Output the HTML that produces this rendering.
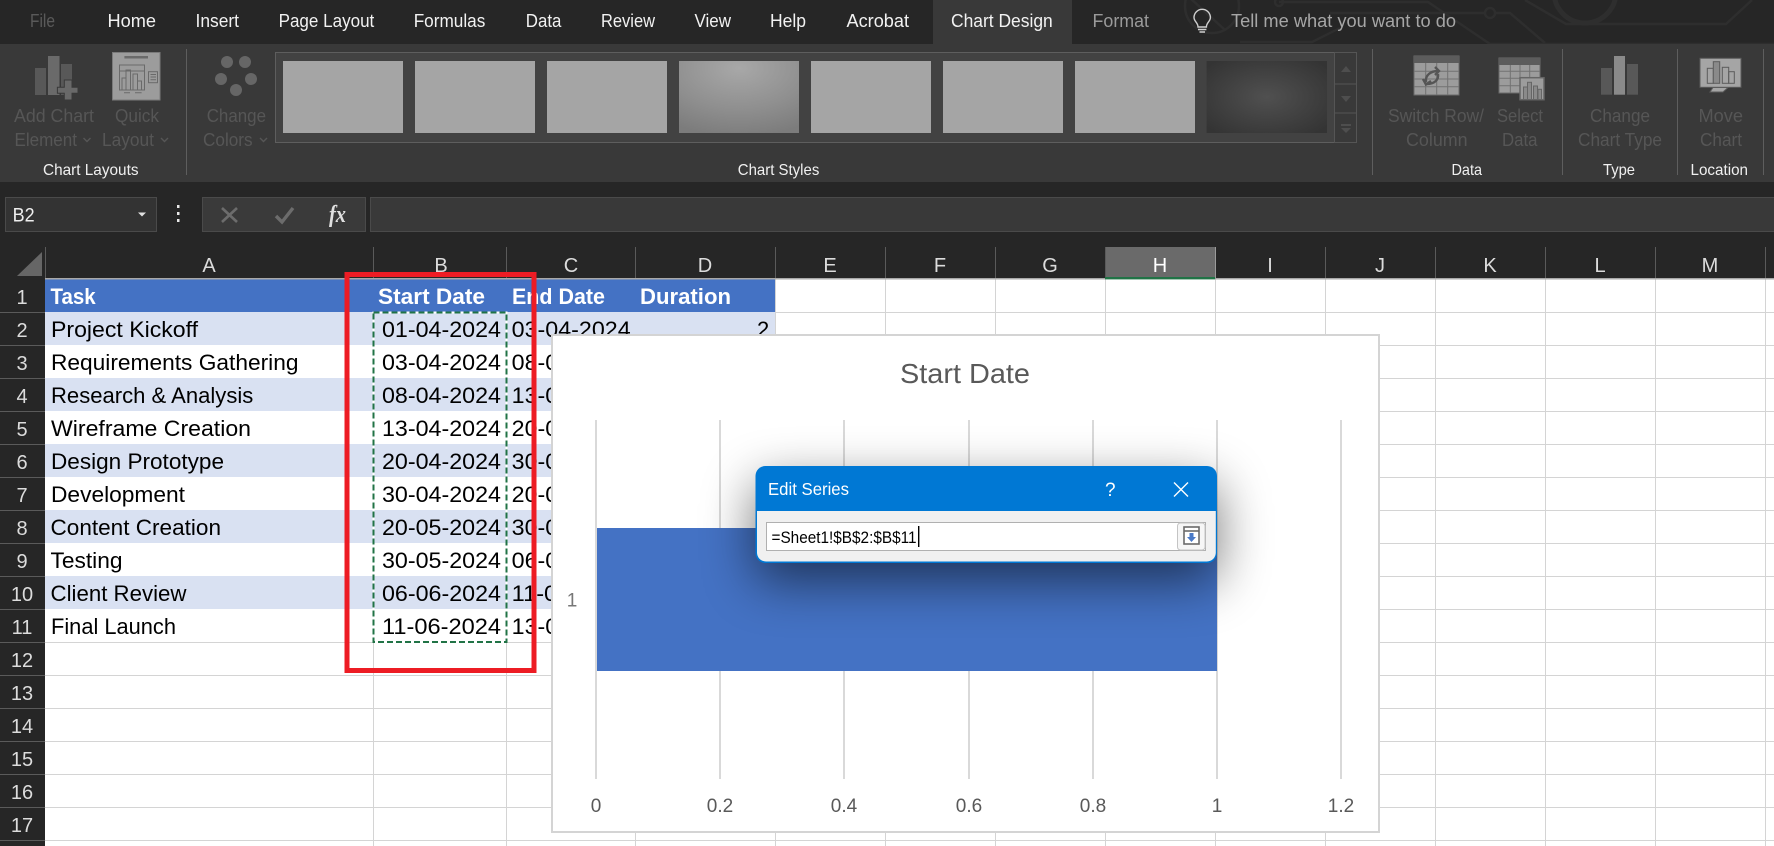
<!DOCTYPE html>
<html lang="en">
<head>
<meta charset="utf-8">
<title>Edit Series</title>
<style>
html,body{margin:0;padding:0;background:#262626;width:1774px;height:846px;overflow:hidden}
svg{display:block}
text{font-family:"Liberation Sans",sans-serif}
.tab{font-size:18px;fill:#f2f2f2}
.dis{font-size:18px;fill:#565656}
.grp{font-size:16px;fill:#f0f0f0}
.col{font-size:20px;fill:#dcdcdc;text-anchor:middle}
.row{font-size:20px;fill:#dcdcdc;text-anchor:middle}
.cell{font-size:22px;fill:#000}
.hd{font-size:22px;fill:#fff;font-weight:bold}
.ax{font-size:19px;fill:#595959;text-anchor:middle}
</style>
</head>
<body>
<svg xmlns="http://www.w3.org/2000/svg" width="1774" height="846" viewBox="0 0 1774 846">
<defs>
<radialGradient id="g4" cx="50%" cy="10%" r="95%"><stop offset="0" stop-color="#a8a8a8"/><stop offset=".6" stop-color="#8f8f8f"/><stop offset="1" stop-color="#7c7c7c"/></radialGradient>
<radialGradient id="g8" cx="50%" cy="50%" r="65%"><stop offset="0" stop-color="#505050"/><stop offset="1" stop-color="#343434"/></radialGradient>
<filter id="sh" x="-30%" y="-120%" width="160%" height="400%"><feGaussianBlur stdDeviation="26"/></filter>
</defs>

<!-- backgrounds -->
<rect width="1774" height="846" fill="#262626"/>
<!-- circuit decoration -->
<g fill="none" stroke="#2e2e2e" stroke-width="2.5">
<circle cx="1212" cy="6" r="27"/>
<path d="M1190 -2L1225 30"/>
<path d="M1279 2H1428L1490 44H1774"/>
<circle cx="1279" cy="2" r="4"/>
<path d="M1330 13H1485"/><circle cx="1490" cy="13" r="5"/>
<path d="M1495 13H1510L1545 43"/>
<circle cx="1585" cy="-8" r="31" stroke-width="5"/>
<path d="M1525 0L1566 24H1726L1752 0"/>
<path d="M1240 42H1312L1340 28"/>
</g>
<!-- ribbon -->
<rect x="0" y="44" width="1774" height="138" fill="#393939"/>
<rect x="933" y="0" width="139" height="44" fill="#393939"/>

<!-- tabs -->
<text class="tab" style="fill:#5a5a5a" x="30" y="27" textLength="25" lengthAdjust="spacingAndGlyphs">File</text>
<text class="tab" x="107.5" y="27" textLength="48.5" lengthAdjust="spacingAndGlyphs">Home</text>
<text class="tab" x="195.5" y="27" textLength="43.5" lengthAdjust="spacingAndGlyphs">Insert</text>
<text class="tab" x="278.6" y="27" textLength="95.7" lengthAdjust="spacingAndGlyphs">Page Layout</text>
<text class="tab" x="413.7" y="27" textLength="71.6" lengthAdjust="spacingAndGlyphs">Formulas</text>
<text class="tab" x="525.8" y="27" textLength="35.6" lengthAdjust="spacingAndGlyphs">Data</text>
<text class="tab" x="601" y="27" textLength="54" lengthAdjust="spacingAndGlyphs">Review</text>
<text class="tab" x="694.5" y="27" textLength="36.5" lengthAdjust="spacingAndGlyphs">View</text>
<text class="tab" x="770" y="27" textLength="36" lengthAdjust="spacingAndGlyphs">Help</text>
<text class="tab" x="846.5" y="27" textLength="62.5" lengthAdjust="spacingAndGlyphs">Acrobat</text>
<text class="tab" x="951" y="27" textLength="101.7" lengthAdjust="spacingAndGlyphs">Chart Design</text>
<text class="tab" style="fill:#9a9a9a" x="1092.5" y="27" textLength="56.5" lengthAdjust="spacingAndGlyphs">Format</text>
<text class="tab" style="fill:#a6a6a6" x="1231" y="27" textLength="225" lengthAdjust="spacingAndGlyphs">Tell me what you want to do</text>
<!-- lightbulb -->
<g fill="none" stroke="#cfcfcf" stroke-width="1.4">
<path d="M1198 27C1198 22.5 1194 21.5 1194 17.5A8.2 8.2 0 0 1 1210.4 17.5C1210.4 21.5 1206.4 22.5 1206.4 27Z"/>
<path d="M1198 29.5H1206.4M1199.5 32H1205"/>
</g>

<!-- ribbon separators -->
<g stroke="#5e5e5e" stroke-width="1">
<path d="M186.5 49V175M1372.5 49V175M1562.5 49V175M1677.5 49V175M1763.5 49V175"/>
</g>

<!-- Add Chart icon -->
<rect x="35" y="68" width="11" height="27" fill="#585858"/>
<rect x="48" y="56" width="11.5" height="39" fill="#6a6a6a"/>
<rect x="61" y="64" width="11" height="31" fill="#585858"/>
<path d="M64.3 80H72V87.3H78V93.3H72V100H64.3V93.3H57.4V87.3H64.3Z" fill="#696969" stroke="#393939" stroke-width="1"/>
<!-- Quick layout icon -->
<rect x="112.5" y="52.5" width="47.5" height="47.5" fill="#9c9c9c" stroke="#7a7a7a"/>
<g fill="none" stroke="#6a6a6a" stroke-width="1">
<path d="M124.4 57.3H148" stroke-width="2.5"/>
<rect x="119.5" y="65" width="25" height="25"/>
<path d="M119.5 71H144.5"/>
<rect x="122" y="78" width="4" height="12"/><rect x="126" y="70" width="4.5" height="20"/><rect x="133" y="74" width="4.5" height="16"/><rect x="137.5" y="81" width="4" height="9"/>
<rect x="148.5" y="71.7" width="9" height="11"/>
<path d="M150.5 74.5H156M150.5 77H156M150.5 79.8H156"/>
<path d="M124 92.7H130M135 92.7H141.6"/>
</g>
<!-- Change colors icon -->
<g fill="#666">
<circle cx="227" cy="62" r="6"/><circle cx="245" cy="62" r="6"/><circle cx="221" cy="79" r="6"/><circle cx="251" cy="79" r="6"/><circle cx="236" cy="90" r="6"/>
</g>
<!-- ribbon disabled labels -->
<text class="dis" x="14" y="122" textLength="80" lengthAdjust="spacingAndGlyphs">Add Chart</text>
<text class="dis" x="14.5" y="146" textLength="62.5" lengthAdjust="spacingAndGlyphs">Element</text>
<text class="dis" x="115" y="122" textLength="44" lengthAdjust="spacingAndGlyphs">Quick</text>
<text class="dis" x="102" y="146" textLength="52" lengthAdjust="spacingAndGlyphs">Layout</text>
<text class="dis" x="206.7" y="122" textLength="59.3" lengthAdjust="spacingAndGlyphs">Change</text>
<text class="dis" x="203" y="146" textLength="49.6" lengthAdjust="spacingAndGlyphs">Colors</text>
<g fill="none" stroke="#565656" stroke-width="1.4">
<path d="M83.5 138L87 141.5L90.5 138M161 138L164.5 141.5L168 138M260 138L263.5 141.5L267 138"/>
</g>
<text class="dis" x="1388" y="122" textLength="96" lengthAdjust="spacingAndGlyphs">Switch Row/</text>
<text class="dis" x="1406" y="146" textLength="61.6" lengthAdjust="spacingAndGlyphs">Column</text>
<text class="dis" x="1497" y="122" textLength="46" lengthAdjust="spacingAndGlyphs">Select</text>
<text class="dis" x="1502" y="146" textLength="35.5" lengthAdjust="spacingAndGlyphs">Data</text>
<text class="dis" x="1590" y="122" textLength="60" lengthAdjust="spacingAndGlyphs">Change</text>
<text class="dis" x="1578" y="146" textLength="84" lengthAdjust="spacingAndGlyphs">Chart Type</text>
<text class="dis" x="1698.5" y="122" textLength="44.5" lengthAdjust="spacingAndGlyphs">Move</text>
<text class="dis" x="1700" y="146" textLength="42" lengthAdjust="spacingAndGlyphs">Chart</text>
<!-- group names -->
<text class="grp" x="43" y="175" textLength="95.5" lengthAdjust="spacingAndGlyphs">Chart Layouts</text>
<text class="grp" x="737.8" y="175" textLength="81.5" lengthAdjust="spacingAndGlyphs">Chart Styles</text>
<text class="grp" x="1451.5" y="175" textLength="30.5" lengthAdjust="spacingAndGlyphs">Data</text>
<text class="grp" x="1603" y="175" textLength="32" lengthAdjust="spacingAndGlyphs">Type</text>
<text class="grp" x="1690.5" y="175" textLength="57.5" lengthAdjust="spacingAndGlyphs">Location</text>

<!-- gallery -->
<rect x="275.5" y="52.5" width="1081" height="90" fill="#424242" stroke="#5e5e5e"/>
<g fill="#a5a5a5">
<rect x="283" y="61" width="120" height="72"/><rect x="415" y="61" width="120" height="72"/><rect x="547" y="61" width="120" height="72"/>
<rect x="679" y="61" width="120" height="72" fill="url(#g4)"/>
<rect x="811" y="61" width="120" height="72"/><rect x="943" y="61" width="120" height="72"/><rect x="1075" y="61" width="120" height="72"/>
<rect x="1206.6" y="61" width="120.4" height="72" fill="url(#g8)"/>
</g>
<rect x="1334.5" y="52.5" width="22" height="90" fill="#393939" stroke="#555"/>
<path d="M1334.5 84H1356.5M1334.5 113H1356.5" stroke="#555"/>
<g fill="#4e4e4e">
<path d="M1341 72L1346 66L1351 72Z"/><path d="M1341 96L1346 102L1351 96Z"/>
<rect x="1341" y="124" width="10" height="2"/><path d="M1341 128H1351L1346 133Z"/>
</g>

<!-- Switch row/col -->
<rect x="1414" y="56" width="45" height="39" fill="#9c9c9c" stroke="#6a6a6a"/>
<rect x="1414" y="56" width="45" height="7" fill="#5c5c5c"/>
<path d="M1425.7 63V95M1436.7 63V95M1447.7 63V95M1414 71.3H1459M1414 79H1459M1414 86.7H1459" stroke="#727272" stroke-width="1"/>
<g fill="none" stroke="#555" stroke-width="2.4">
<path d="M1426 82C1425 75 1431 71 1438 71M1435 67L1439 71L1435 75"/>
<path d="M1438 74C1439 80 1434 84 1427 84M1423 79L1426 84.5L1431 81"/>
</g>
<!-- Select data -->
<rect x="1499" y="58" width="41" height="35" fill="#9c9c9c" stroke="#6a6a6a"/>
<rect x="1499" y="58" width="41" height="7" fill="#5c5c5c"/>
<path d="M1510.3 65V93M1520 65V93M1529.7 65V78M1499 71.3H1540M1499 78.3H1540M1499 85.7H1520" stroke="#727272" stroke-width="1"/>
<rect x="1520" y="77.7" width="24" height="22" fill="#9c9c9c" stroke="#666" stroke-width="1.5"/>
<g fill="#8a8a8a" stroke="#666">
<rect x="1523.5" y="87" width="4" height="12.5"/><rect x="1527.5" y="82.3" width="4" height="17.2"/><rect x="1533.5" y="86" width="4" height="13.5"/><rect x="1538" y="89.3" width="3.5" height="10.2"/>
</g>
<!-- Change chart type -->
<rect x="1601" y="68" width="11" height="26.7" fill="#585858"/>
<rect x="1614" y="56" width="11" height="38.7" fill="#8a8a8a"/>
<rect x="1627" y="64" width="11" height="30.7" fill="#585858"/>
<!-- Move chart -->
<rect x="1700" y="58.3" width="41" height="29" fill="#a5a5a5" stroke="#5c5c5c"/>
<path d="M1713 87.5L1710 92H1723L1728 87.5Z" fill="#a5a5a5" stroke="#5c5c5c"/>
<g fill="none" stroke="#5c5c5c">
<rect x="1707.3" y="68.3" width="6" height="15"/><rect x="1713.3" y="61.7" width="6.4" height="21.6" fill="#8a8a8a"/>
<rect x="1722.3" y="67.3" width="6.4" height="16"/><rect x="1728.7" y="71.7" width="5.6" height="11.6"/>
</g>

<!-- formula bar -->
<rect x="5.5" y="197.5" width="151" height="34" fill="#333" stroke="#4a4a4a"/>
<text x="12.6" y="221.5" style="font-size:19px;fill:#efefef" textLength="22" lengthAdjust="spacingAndGlyphs">B2</text>
<path d="M138 212.5H146L142 216.5Z" fill="#e0e0e0"/>
<g fill="#e8e8e8"><rect x="177" y="205" width="2.5" height="3"/><rect x="177" y="212" width="2.5" height="3"/><rect x="177" y="219" width="2.5" height="3"/></g>
<rect x="202.5" y="197.5" width="163" height="34" fill="#3a3a3a" stroke="#4a4a4a"/>
<path d="M222 208L237 222M237 208L222 222" stroke="#6c6c6c" stroke-width="2.6" fill="none"/>
<path d="M276 216L282 222L293 208" stroke="#6c6c6c" stroke-width="3.4" fill="none"/>
<text x="329" y="222" style='font-family:"Liberation Serif",serif;font-size:24px;font-style:italic;font-weight:bold;fill:#e0e0e0' textLength="17" lengthAdjust="spacingAndGlyphs">fx</text>
<rect x="370.5" y="197.5" width="1410" height="34" fill="#393939" stroke="#4a4a4a"/>

<!-- corner -->
<path d="M42 252V276H17Z" fill="#666"/>
<rect x="1105" y="247" width="110" height="32" fill="#6a6a6a"/>
<path d="M45.5 247V279M373.5 247V279M506.5 247V279M635.5 247V279M775.5 247V279M885.5 247V279M995.5 247V279M1105.5 247V279M1215.5 247V279M1325.5 247V279M1435.5 247V279M1545.5 247V279M1655.5 247V279M1765.5 247V279" stroke="#5a5a5a" stroke-width="1"/>
<text class="col" x="209" y="272">A</text><text class="col" x="441" y="272">B</text><text class="col" x="571" y="272">C</text><text class="col" x="705" y="272">D</text><text class="col" x="830" y="272">E</text><text class="col" x="940" y="272">F</text><text class="col" x="1050" y="272">G</text><text class="col" x="1160" y="272" style="fill:#fff">H</text><text class="col" x="1270" y="272">I</text><text class="col" x="1380" y="272">J</text><text class="col" x="1490" y="272">K</text><text class="col" x="1600" y="272">L</text><text class="col" x="1710" y="272">M</text>

<!-- row headers -->
<path d="M0 312.5H45M0 345.5H45M0 378.5H45M0 411.5H45M0 444.5H45M0 477.5H45M0 510.5H45M0 543.5H45M0 576.5H45M0 609.5H45M0 642.5H45M0 675.5H45M0 708.5H45M0 741.5H45M0 774.5H45M0 807.5H45M0 840.5H45" stroke="#5a5a5a"/>
<text class="row" x="22" y="304">1</text><text class="row" x="22" y="337">2</text><text class="row" x="22" y="370">3</text><text class="row" x="22" y="403">4</text><text class="row" x="22" y="436">5</text><text class="row" x="22" y="469">6</text><text class="row" x="22" y="502">7</text><text class="row" x="22" y="535">8</text><text class="row" x="22" y="568">9</text><text class="row" x="22" y="601">10</text><text class="row" x="22" y="634">11</text><text class="row" x="22" y="667">12</text><text class="row" x="22" y="700">13</text><text class="row" x="22" y="733">14</text><text class="row" x="22" y="766">15</text><text class="row" x="22" y="799">16</text><text class="row" x="22" y="832">17</text>

<!-- sheet -->
<rect x="45" y="279" width="1729" height="567" fill="#fff"/>
<path d="M373.5 279V846M506.5 279V846M635.5 279V846M775.5 279V846M885.5 279V846M995.5 279V846M1105.5 279V846M1215.5 279V846M1325.5 279V846M1435.5 279V846M1545.5 279V846M1655.5 279V846M1765.5 279V846" stroke="#d4d4d4"/>
<path d="M45 312.5H1774M45 345.5H1774M45 378.5H1774M45 411.5H1774M45 444.5H1774M45 477.5H1774M45 510.5H1774M45 543.5H1774M45 576.5H1774M45 609.5H1774M45 642.5H1774M45 675.5H1774M45 708.5H1774M45 741.5H1774M45 774.5H1774M45 807.5H1774M45 840.5H1774" stroke="#d4d4d4"/>
<rect x="45" y="312" width="730" height="330" fill="#fff"/>
<rect x="45" y="279" width="730" height="33" fill="#4472c4"/>
<g fill="#d9e1f2">
<rect x="45" y="312" width="730" height="33"/><rect x="45" y="378" width="730" height="33"/><rect x="45" y="444" width="730" height="33"/><rect x="45" y="510" width="730" height="33"/><rect x="45" y="576" width="730" height="33"/>
</g>
<path d="M45 278.8H1105M1215 278.8H1774" stroke="#a8a8a8" stroke-width="1.5"/>
<rect x="1105" y="277" width="110" height="2.4" fill="#217346"/>
<path d="M1215.5 247V279" stroke="#9a9a9a"/>

<text class="hd" x="50.5" y="304" textLength="45.2" lengthAdjust="spacingAndGlyphs">Task</text>
<text class="hd" x="378" y="304" textLength="107" lengthAdjust="spacingAndGlyphs">Start Date</text>
<text class="hd" x="512" y="304" textLength="93" lengthAdjust="spacingAndGlyphs">End Date</text>
<text class="hd" x="640" y="304" textLength="91" lengthAdjust="spacingAndGlyphs">Duration</text>

<text class="cell" x="51" y="337" textLength="147" lengthAdjust="spacingAndGlyphs">Project Kickoff</text>
<text class="cell" x="51" y="370" textLength="247.5" lengthAdjust="spacingAndGlyphs">Requirements Gathering</text>
<text class="cell" x="51" y="403" textLength="202.3" lengthAdjust="spacingAndGlyphs">Research &amp; Analysis</text>
<text class="cell" x="51" y="436" textLength="200" lengthAdjust="spacingAndGlyphs">Wireframe Creation</text>
<text class="cell" x="51" y="469" textLength="173" lengthAdjust="spacingAndGlyphs">Design Prototype</text>
<text class="cell" x="51" y="502" textLength="134" lengthAdjust="spacingAndGlyphs">Development</text>
<text class="cell" x="50.5" y="535" textLength="170.5" lengthAdjust="spacingAndGlyphs">Content Creation</text>
<text class="cell" x="50.5" y="568" textLength="72" lengthAdjust="spacingAndGlyphs">Testing</text>
<text class="cell" x="50.5" y="601" textLength="136" lengthAdjust="spacingAndGlyphs">Client Review</text>
<text class="cell" x="51" y="634" textLength="125" lengthAdjust="spacingAndGlyphs">Final Launch</text>

<g>
<text class="cell" x="382" y="337" textLength="119" lengthAdjust="spacingAndGlyphs">01-04-2024</text>
<text class="cell" x="382" y="370" textLength="119" lengthAdjust="spacingAndGlyphs">03-04-2024</text>
<text class="cell" x="382" y="403" textLength="119" lengthAdjust="spacingAndGlyphs">08-04-2024</text>
<text class="cell" x="382" y="436" textLength="119" lengthAdjust="spacingAndGlyphs">13-04-2024</text>
<text class="cell" x="382" y="469" textLength="119" lengthAdjust="spacingAndGlyphs">20-04-2024</text>
<text class="cell" x="382" y="502" textLength="119" lengthAdjust="spacingAndGlyphs">30-04-2024</text>
<text class="cell" x="382" y="535" textLength="119" lengthAdjust="spacingAndGlyphs">20-05-2024</text>
<text class="cell" x="382" y="568" textLength="119" lengthAdjust="spacingAndGlyphs">30-05-2024</text>
<text class="cell" x="382" y="601" textLength="119" lengthAdjust="spacingAndGlyphs">06-06-2024</text>
<text class="cell" x="382" y="634" textLength="119" lengthAdjust="spacingAndGlyphs">11-06-2024</text>
<text class="cell" x="511.7" y="337" textLength="119" lengthAdjust="spacingAndGlyphs">03-04-2024</text>
<text class="cell" x="511.7" y="370" textLength="119" lengthAdjust="spacingAndGlyphs">08-04-2024</text>
<text class="cell" x="511.7" y="403" textLength="119" lengthAdjust="spacingAndGlyphs">13-04-2024</text>
<text class="cell" x="511.7" y="436" textLength="119" lengthAdjust="spacingAndGlyphs">20-04-2024</text>
<text class="cell" x="511.7" y="469" textLength="119" lengthAdjust="spacingAndGlyphs">30-04-2024</text>
<text class="cell" x="511.7" y="502" textLength="119" lengthAdjust="spacingAndGlyphs">20-05-2024</text>
<text class="cell" x="511.7" y="535" textLength="119" lengthAdjust="spacingAndGlyphs">30-05-2024</text>
<text class="cell" x="511.7" y="568" textLength="119" lengthAdjust="spacingAndGlyphs">06-06-2024</text>
<text class="cell" x="511.7" y="601" textLength="119" lengthAdjust="spacingAndGlyphs">11-06-2024</text>
<text class="cell" x="511.7" y="634" textLength="119" lengthAdjust="spacingAndGlyphs">13-06-2024</text>
<text class="cell" x="757" y="337">2</text>
</g>

<!-- marching ants -->
<rect x="373.5" y="312.5" width="133" height="329.5" fill="none" stroke="#fff" stroke-width="2"/>
<rect x="373.5" y="312.5" width="133" height="329.5" fill="none" stroke="#217346" stroke-width="2" stroke-dasharray="6 3"/>

<!-- red box -->
<rect x="347" y="274.5" width="187" height="396" fill="none" stroke="#ed1c24" stroke-width="5"/>

<!-- chart -->
<rect x="552" y="335" width="827" height="497" fill="#fff" stroke="#d4d4d4" stroke-width="2"/>
<text x="900" y="383" style="font-size:28px;fill:#595959" textLength="130" lengthAdjust="spacingAndGlyphs">Start Date</text>
<path d="M596 420V779M720 420V779M844 420V779M969 420V779M1093 420V779M1217 420V779M1341 420V779" stroke="#d9d9d9" stroke-width="2"/>
<rect x="597" y="528" width="620" height="143" fill="#4472c4"/>
<text class="ax" x="572" y="606.5" style="fill:#777">1</text>
<text class="ax" x="596" y="812">0</text>
<text class="ax" x="720" y="812">0.2</text>
<text class="ax" x="844" y="812">0.4</text>
<text class="ax" x="969" y="812">0.6</text>
<text class="ax" x="1093" y="812">0.8</text>
<text class="ax" x="1217" y="812">1</text>
<text class="ax" x="1341" y="812">1.2</text>

<!-- dialog -->
<rect x="755" y="484" width="462" height="97" rx="10" fill="#000" opacity=".55" filter="url(#sh)"/>
<rect x="755.5" y="466" width="461.5" height="97" rx="10" fill="#0078d4"/>
<path d="M757 511H1215.8V552A9 9 0 0 1 1206.8 561.5H766A9 9 0 0 1 757 552Z" fill="#f0f0f0"/>
<text x="768" y="495" style="font-size:17.5px;fill:#fff" textLength="81" lengthAdjust="spacingAndGlyphs">Edit Series</text>
<text x="1105" y="496" style="font-size:19px;fill:#fff">?</text>
<path d="M1174 482.5L1188 496.5M1188 482.5L1174 496.5" stroke="#fff" stroke-width="1.4" fill="none"/>
<rect x="766.5" y="522.5" width="439" height="28" fill="#fff" stroke="#b0b0b0"/>
<text x="771.5" y="543" style="font-size:17px;fill:#000" textLength="145" lengthAdjust="spacingAndGlyphs">=Sheet1!$B$2:$B$11</text>
<rect x="918" y="526" width="1.4" height="21" fill="#000"/>
<rect x="1177.5" y="523" width="27.5" height="27" rx="3" fill="#f6f6f6" stroke="#c4c4c4"/>
<rect x="1184" y="527" width="15" height="17" fill="#fff" stroke="#6a6a6a" stroke-width="1.6"/>
<path d="M1184 531H1199" stroke="#6a6a6a" stroke-width="1.6"/>
<path d="M1189.5 533H1193.5V537H1196L1191.5 542L1187 537H1189.5Z" fill="#4a7ac8"/>
</svg>
</body>
</html>
